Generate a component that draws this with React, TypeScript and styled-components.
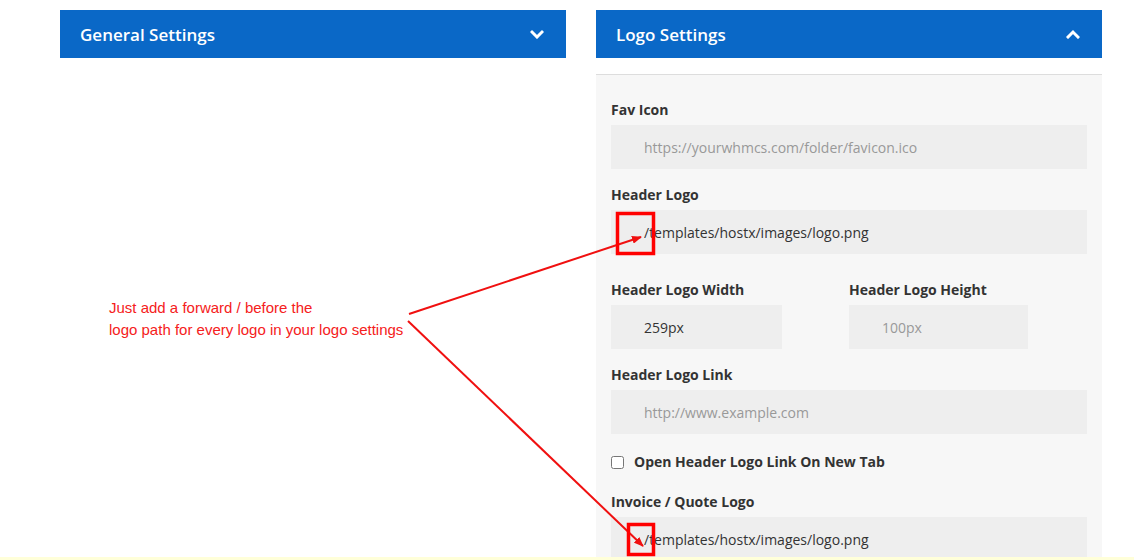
import React from 'react';
import styled, { createGlobalStyle } from 'styled-components';

const GlobalStyle = createGlobalStyle`
  html, body {
    margin: 0;
    padding: 0;
    background: #fff;
  }
  body {
    font-family: 'Open Sans', 'Liberation Sans', sans-serif;
    color: #333;
  }
`;

const Page = styled.div`
  position: relative;
  width: 1134px;
  height: 560px;
  display: flex;
  flex-direction: column;
  overflow: hidden;
`;

const Main = styled.div`
  flex: 1;
  min-height: 0;
  overflow: hidden;
  display: flex;
  align-items: flex-start;
  gap: 30px;
  padding: 10px 0 0 60px;
`;

const Notice = styled.div`
  flex-shrink: 0;
  height: 3px;
  background: #ffffd9;
`;

const Column = styled.div`
  width: 506px;
  display: flex;
  flex-direction: column;
`;

const PanelHeader = styled.div`
  flex-shrink: 0;
  height: 48px;
  background: #0a68c7;
  color: #fff;
  display: flex;
  align-items: center;
  justify-content: space-between;
  padding: 0 22px 0 20px;
  font-size: 17px;
  font-weight: 600;
`;

const PanelBody = styled.div`
  margin-top: 16px;
  border-top: 1px solid #ddd;
  background: #f7f7f7;
  padding: 25px 15px 0;
`;

const Field = styled.div<{ $gap?: number }>`
  margin-bottom: ${p => p.$gap ?? 16}px;
`;

const Label = styled.label`
  display: block;
  font-size: 14px;
  font-weight: 700;
  line-height: 20px;
  color: #333;
  margin-bottom: 5px;
`;

const Input = styled.input<{ $width?: number }>`
  display: block;
  box-sizing: border-box;
  width: ${p => (p.$width ? `${p.$width}px` : '100%')};
  height: 44px;
  border: none;
  outline: none;
  background: #eee;
  padding: 0 0 0 33px;
  font-family: 'Open Sans', 'Liberation Sans', sans-serif;
  font-size: 14px;
  color: #333;

  &::placeholder {
    color: #999;
  }
`;

const Row = styled.div`
  display: grid;
  grid-template-columns: 238px 1fr;
  padding-top: 10px;
`;

const CheckRow = styled.label`
  display: flex;
  align-items: center;
  gap: 10px;
  font-size: 14px;
  font-weight: 700;
  line-height: 20px;
  margin: 18px 0 20px;

  input {
    margin: 0;
    width: 13px;
    height: 13px;
  }
`;

const Note = styled.div`
  position: absolute;
  left: 109px;
  top: 297px;
  font-family: 'Liberation Sans', Arial, sans-serif;
  font-size: 15px;
  line-height: 22px;
  color: #f52020;
`;

const Overlay = styled.svg`
  position: absolute;
  left: 0;
  top: 0;
  pointer-events: none;
`;

const Chevron: React.FC<{ up?: boolean }> = ({ up }) => (
  <svg width="14" height="10" viewBox="0 0 14 10">
    <polyline
      points={up ? '2,8 7,3 12,8' : '2,3 7,8 12,3'}
      fill="none"
      stroke="#fff"
      strokeWidth="3"
      strokeLinecap="square"
    />
  </svg>
);

export default function App() {
  return (
    <Page>
      <GlobalStyle />
      <Main>
        <Column>
          <PanelHeader>
            General Settings
            <Chevron />
          </PanelHeader>
        </Column>
        <Column>
          <PanelHeader>
            Logo Settings
            <Chevron up />
          </PanelHeader>
          <PanelBody>
            <Field>
              <Label>Fav Icon</Label>
              <Input placeholder="https://yourwhmcs.com/folder/favicon.ico" readOnly />
            </Field>
            <Field>
              <Label>Header Logo</Label>
              <Input defaultValue="/templates/hostx/images/logo.png" />
            </Field>
            <Row>
              <Field>
                <Label>Header Logo Width</Label>
                <Input $width={171} defaultValue="259px" />
              </Field>
              <Field>
                <Label>Header Logo Height</Label>
                <Input $width={179} placeholder="100px" />
              </Field>
            </Row>
            <Field $gap={0}>
              <Label>Header Logo Link</Label>
              <Input placeholder="http://www.example.com" />
            </Field>
            <CheckRow>
              <input type="checkbox" />
              Open Header Logo Link On New Tab
            </CheckRow>
            <Field>
              <Label>Invoice / Quote Logo</Label>
              <Input defaultValue="/templates/hostx/images/logo.png" />
            </Field>
          </PanelBody>
        </Column>
      </Main>
      <Notice />
      <Note>
        Just add a forward / before the
        <br />
        logo path for every logo in your logo settings
      </Note>
      <Overlay width="1134" height="560" viewBox="0 0 1134 560">
        <defs>
          <marker id="head" markerWidth="10" markerHeight="8" refX="9" refY="4" orient="auto" markerUnits="userSpaceOnUse">
            <polygon points="0,0 10,4 0,8" fill="#f01010" />
          </marker>
        </defs>
        <line x1="409" y1="314" x2="641" y2="237" stroke="#f01010" strokeWidth="2" markerEnd="url(#head)" />
        <line x1="408" y1="321" x2="643" y2="546" stroke="#f01010" strokeWidth="2" markerEnd="url(#head)" />
        <rect x="617.5" y="213.5" width="36" height="40" fill="none" stroke="#f00" strokeWidth="3.5" />
        <rect x="628.5" y="524.5" width="25" height="30" fill="none" stroke="#f00" strokeWidth="3.5" />
      </Overlay>
    </Page>
  );
}
